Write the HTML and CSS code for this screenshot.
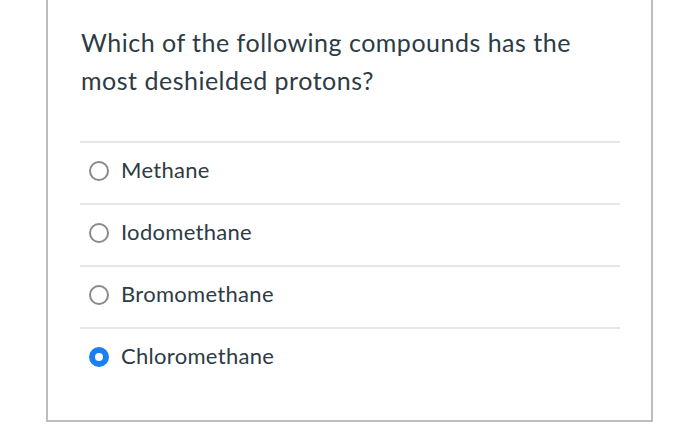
FILE: index.html
```html
<!DOCTYPE html>
<html>
<head>
<meta charset="utf-8">
<link rel="stylesheet" href="styles.css">
</head>
<body>
<div class="card">
  <div class="question">Which of the following compounds has the most deshielded protons?</div>
  <ul class="options">
    <li class="option"><span class="radio"></span><span class="label">Methane</span></li>
    <li class="option"><span class="radio"></span><span class="label">Iodomethane</span></li>
    <li class="option"><span class="radio"></span><span class="label">Bromomethane</span></li>
    <li class="option"><span class="radio checked"></span><span class="label">Chloromethane</span></li>
  </ul>
</div>
</body>
</html>
```
FILE: styles.css
```css
html, body {
  margin: 0;
  padding: 0;
  background: #ffffff;
}
body {
  width: 700px;
  height: 427px;
  overflow: hidden;
  font-family: Lato, "Liberation Sans", sans-serif;
  color: #2d3b45;
}
.card {
  margin-left: 46px;
  width: 540px;
  height: 420px;
  border: 2px solid #bdbdbd;
  border-top: none;
  padding: 0 31px 0 32px;
  box-sizing: content-box;
}
.question {
  padding: 23px 0 0 1px;
  font-size: 25px;
  letter-spacing: 0.5px;
  line-height: 38px;
  width: 530px;
  color: #2d3b45;
}
.options {
  list-style: none;
  margin: 42px 0 0 0;
  padding: 0;
  width: 540px;
}
.option {
  display: flex;
  align-items: center;
  gap: 12px;
  height: 62px;
  box-sizing: border-box;
  border-top: 2px solid #e6e6e6;
  padding: 0 0 4px 9px;
}
.radio {
  width: 20px;
  height: 20px;
  box-sizing: border-box;
  border: 2px solid #8a8a8a;
  border-radius: 50%;
  flex: none;
}
.radio.checked {
  border: 6.5px solid #1a7ff0;
}
.label {
  font-size: 22px;
  letter-spacing: 0.3px;
  margin-bottom: 4px;
  color: #2d3b45;
}
```
